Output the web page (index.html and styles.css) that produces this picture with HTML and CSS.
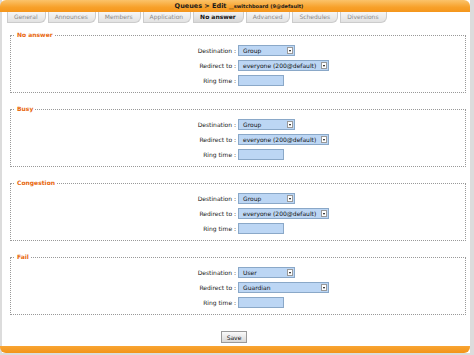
FILE: index.html
```html
<!DOCTYPE html>
<html lang="en">
<head>
  <meta charset="UTF-8">
  <title>Queues - Edit</title>
  <link rel="stylesheet" href="styles.css">
</head>
<body>
  <div class="page">
    <div class="header">
      Queues &gt; Edit <span class="sub">__switchboard (9@default)</span>
    </div>
    <div class="tabs">
      <span class="tab">General</span>
      <span class="tab">Announces</span>
      <span class="tab">Members</span>
      <span class="tab">Application</span>
      <span class="tab active">No answer</span>
      <span class="tab">Advanced</span>
      <span class="tab">Schedules</span>
      <span class="tab">Diversions</span>
    </div>

    <div class="content">
      <fieldset class="box">
        <legend>No answer</legend>
        <div class="row"><label>Destination :</label><div class="select short">Group<span class="arrow"></span></div></div>
        <div class="row"><label>Redirect to :</label><div class="select long">everyone (200@default)<span class="arrow"></span></div></div>
        <div class="row"><label>Ring time :</label><div class="input"></div></div>
      </fieldset>

      <fieldset class="box">
        <legend>Busy</legend>
        <div class="row"><label>Destination :</label><div class="select short">Group<span class="arrow"></span></div></div>
        <div class="row"><label>Redirect to :</label><div class="select long">everyone (200@default)<span class="arrow"></span></div></div>
        <div class="row"><label>Ring time :</label><div class="input"></div></div>
      </fieldset>

      <fieldset class="box">
        <legend>Congestion</legend>
        <div class="row"><label>Destination :</label><div class="select short">Group<span class="arrow"></span></div></div>
        <div class="row"><label>Redirect to :</label><div class="select long">everyone (200@default)<span class="arrow"></span></div></div>
        <div class="row"><label>Ring time :</label><div class="input"></div></div>
      </fieldset>

      <fieldset class="box">
        <legend>Fail</legend>
        <div class="row"><label>Destination :</label><div class="select short">User<span class="arrow"></span></div></div>
        <div class="row"><label>Redirect to :</label><div class="select long">Guardian<span class="arrow"></span></div></div>
        <div class="row"><label>Ring time :</label><div class="input"></div></div>
      </fieldset>

      <div class="actions">
        <button class="button">Save</button>
      </div>
    </div>
    <div class="footer"></div>
  </div>
</body>
</html>
```

FILE: styles.css
```css
body {
  margin: 0;
  background-color: #dcdcdc;
  font-family: "DejaVu Sans", Verdana, sans-serif;
  font-size: 6px;
  color: #222;
}
.page {
  width: 468px;
  height: 353px;
  margin-left: 2px;
  background-color: #fff;
  display: flex;
  flex-direction: column;
}
.header {
  height: 12px;
  line-height: 12px;
  text-align: center;
  font-weight: bold;
  font-size: 6.5px;
  color: #1a1a1a;
  background: linear-gradient(#fbc36a, #f7a12a 60%, #f5961c);
  border-radius: 6px 6px 0 0;
  margin-left: -2px;
  padding-left: 8px;
}
.header .sub {
  font-size: 5px;
}
.tabs {
  display: flex;
  height: 11px;
  padding-left: 5px;
  background-color: #fff;
}
.tab {
  height: 10px;
  line-height: 10px;
  padding: 0 7px 0 6px;
  margin-right: 2px;
  color: #8a8a8a;
  background: linear-gradient(#f6f6f6, #e2e2e2);
  border: 1px solid #ccc;
  border-top: none;
  border-radius: 0 0 6px 0;
}
.tab.active {
  background: linear-gradient(#f2f2f2, #d8d8d8);
  color: #111;
  font-weight: bold;
}
.content {
  flex-grow: 1;
  padding: 8px 4px 0 8px;
}
.box {
  margin: 0 0 12px 0;
  padding: 4px 0 4px 0;
  border: 1px dotted #999;
}
.box legend {
  color: #e8670c;
  font-weight: bold;
  font-size: 6px;
  padding: 0 2px;
  margin-left: 4px;
  line-height: 8px;
}
.row {
  display: flex;
  align-items: center;
  height: 15px;
}
.row label {
  width: 225px;
  text-align: right;
  padding-right: 2px;
  color: #222;
}
.select {
  position: relative;
  height: 9px;
  line-height: 9px;
  padding-left: 4px;
  background-color: #bcd6f4;
  border: 1px solid #8aa8c8;
  color: #111;
  font-size: 6px;
}
.select.short {
  width: 51px;
}
.select.long {
  width: 85px;
}
.arrow {
  position: absolute;
  right: 1px;
  top: 1px;
  width: 6px;
  height: 7px;
  background-color: #fff;
  border: 1px solid #999;
  box-sizing: border-box;
}
.arrow::after {
  content: "";
  position: absolute;
  left: 1px;
  top: 2px;
  border-left: 1.5px solid transparent;
  border-right: 1.5px solid transparent;
  border-top: 2px solid #000;
}
.input {
  width: 44px;
  height: 9px;
  background-color: #bcd6f4;
  border: 1px solid #8aa8c8;
}
.actions {
  text-align: center;
  padding-top: 4px;
  padding-right: 8px;
}
.button {
  font-family: inherit;
  font-size: 6px;
  height: 12px;
  padding: 0 5px;
  background: linear-gradient(#fafafa, #d8d8d8);
  border: 1px solid #999;
  color: #111;
}
.footer {
  height: 7px;
  margin-left: -2px;
  background: linear-gradient(#f9a533, #f29419);
  border-radius: 0 0 6px 6px;
}
```
